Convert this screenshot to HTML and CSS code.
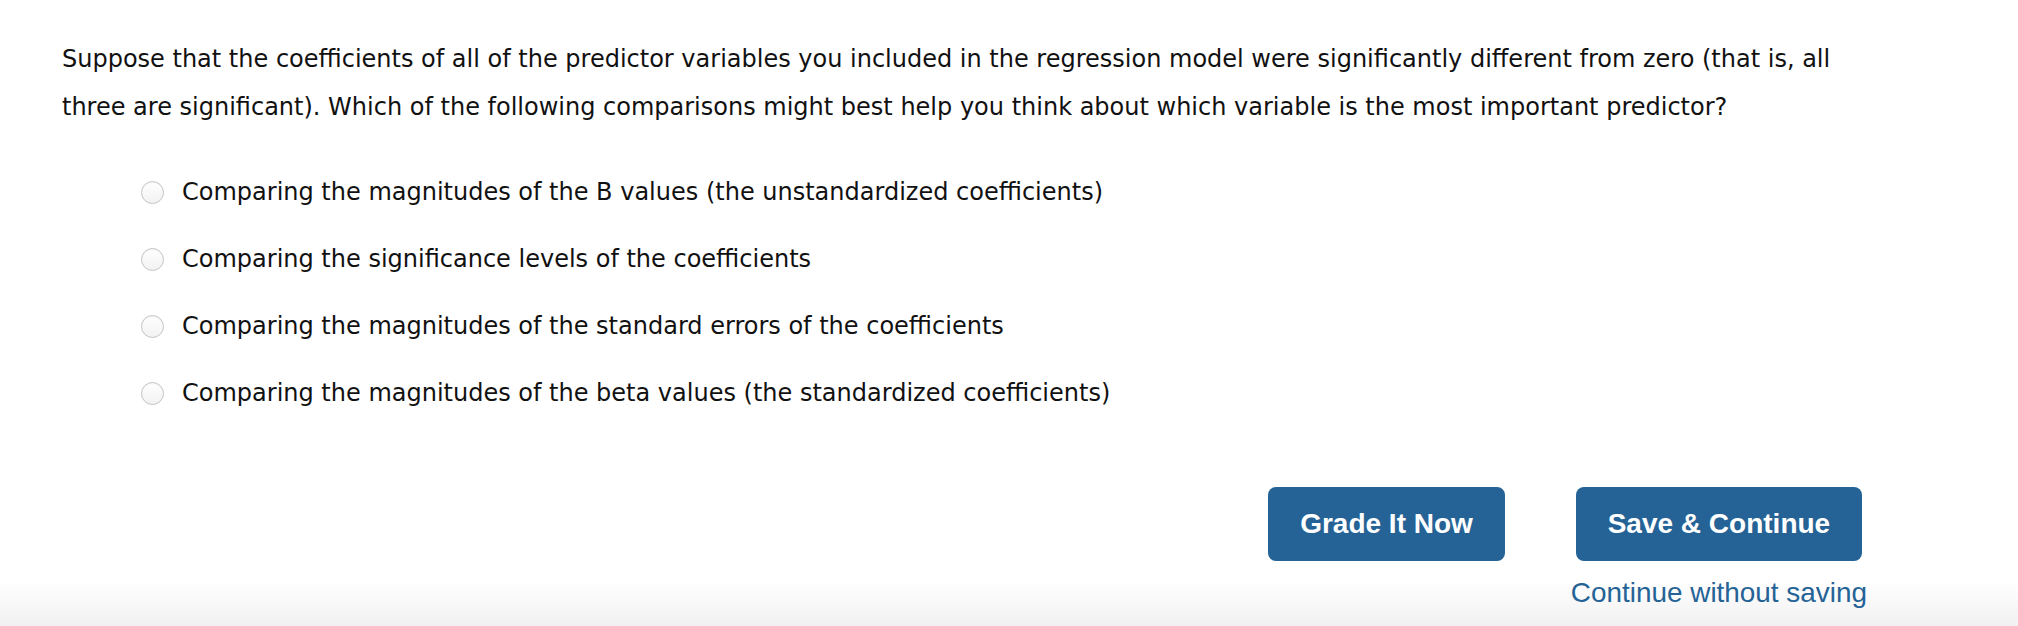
FILE: index.html
```html
<!DOCTYPE html>
<html lang="en">
<head>
<meta charset="utf-8">
<title>Question</title>
<link rel="stylesheet" href="styles.css">
</head>
<body>
<main class="page">
  <p class="question">Suppose that the coefficients of all of the predictor variables you included in the regression model were significantly different from zero (that is, all three are significant). Which of the following comparisons might best help you think about which variable is the most important predictor?</p>
  <ul class="options">
    <li class="option"><span class="radio"></span><span class="label">Comparing the magnitudes of the B values (the unstandardized coefficients)</span></li>
    <li class="option"><span class="radio"></span><span class="label">Comparing the significance levels of the coefficients</span></li>
    <li class="option"><span class="radio"></span><span class="label">Comparing the magnitudes of the standard errors of the coefficients</span></li>
    <li class="option"><span class="radio"></span><span class="label">Comparing the magnitudes of the beta values (the standardized coefficients)</span></li>
  </ul>
  <div class="actions">
    <button class="btn" type="button">Grade It Now</button>
    <div class="save-col">
      <button class="btn" type="button">Save &amp; Continue</button>
      <a class="skip-link" href="#">Continue without saving</a>
    </div>
  </div>
</main>
</body>
</html>
```

FILE: styles.css
```css
html, body {
  margin: 0;
  height: 100%;
}
body {
  background: linear-gradient(to bottom, #ffffff 0, #ffffff 580px, #f1f1f1 626px);
  font-family: "DejaVu Sans", Verdana, sans-serif;
  color: #111;
}
.page {
  padding: 35px 151px 0 62px;
}
.question {
  margin: 0;
  font-size: 24px;
  line-height: 48px;
}
.options {
  list-style: none;
  margin: 39px 0 0 0;
  padding: 0 0 0 79px;
  display: flex;
  flex-direction: column;
  gap: 23px;
}
.option {
  display: flex;
  align-items: center;
  gap: 18px;
  font-size: 24px;
  line-height: 44px;
}
.radio {
  width: 21px;
  height: 21px;
  border-radius: 50%;
  border: 1px solid #c4c4c4;
  background: linear-gradient(to bottom, #ffffff, #f2f2f2);
  box-shadow: inset 0 1px 1px rgba(0,0,0,0.05);
  flex: none;
}
.actions {
  display: flex;
  justify-content: flex-end;
  align-items: flex-start;
  gap: 66px;
  margin-top: 72px;
}
.save-col {
  display: flex;
  flex-direction: column;
  align-items: center;
}
.btn {
  height: 74px;
  padding: 0 32px;
  border: none;
  border-radius: 8px;
  background: #256396;
  color: #fff;
  font-family: "Liberation Sans", Arial, sans-serif;
  font-weight: bold;
  font-size: 28px;
  cursor: pointer;
}
.skip-link {
  margin-top: 16px;
  font-family: "Liberation Sans", Arial, sans-serif;
  font-size: 27.9px;
  color: #256396;
  text-decoration: none;
}
```
